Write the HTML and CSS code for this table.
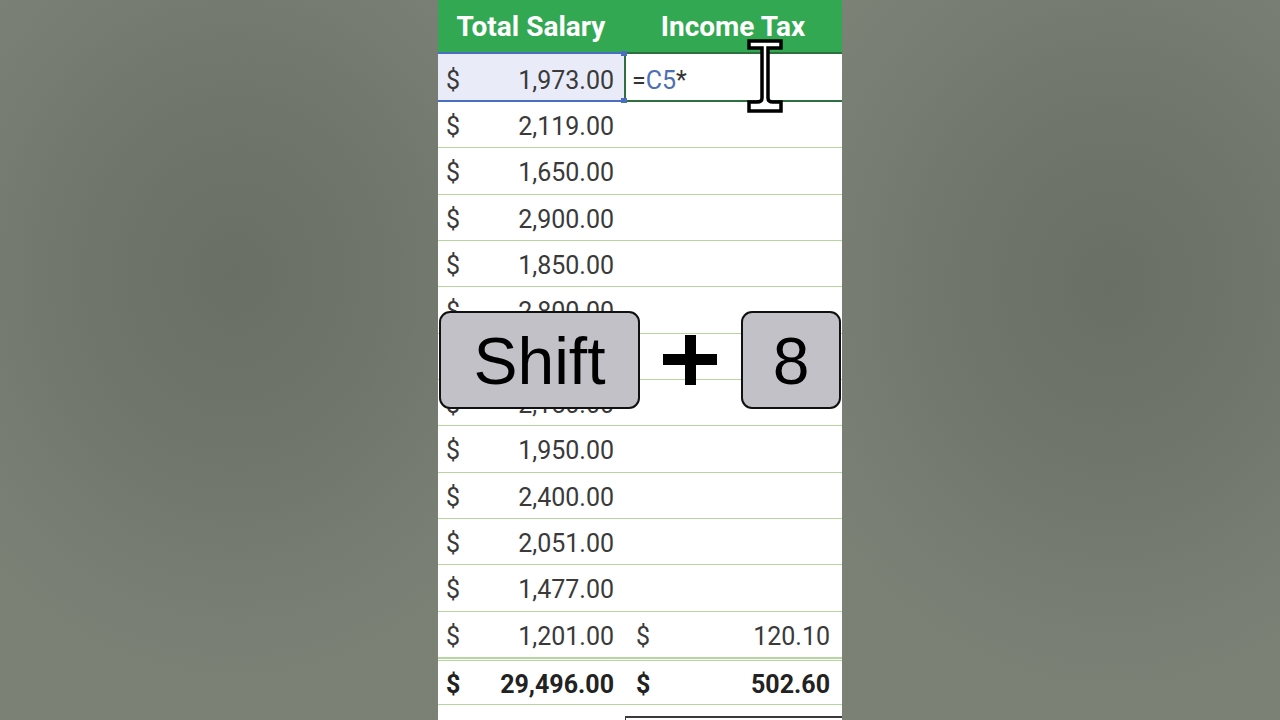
FILE: index.html
```html
<!DOCTYPE html>
<html lang="en">
<head>
<meta charset="utf-8">
<title>Income Tax formula</title>
<link rel="stylesheet" href="styles.css">
</head>
<body>
<div class="stage">
  <div class="side side-left"></div>
  <div class="sheet">
    <div class="head">
      <div class="hc c1">Total Salary</div>
      <div class="hc c2">Income Tax</div>
    </div>
    <div class="row row-active">
      <div class="cell c1 sel"><span class="cur">$</span><span class="num">1,973.00</span></div>
      <div class="cell c2 edit"><span class="op">=</span><span class="ref">C5</span><span class="op">*</span></div>
    </div>
    <div class="row"><div class="cell c1"><span class="cur">$</span><span class="num">2,119.00</span></div><div class="cell c2"></div></div>
    <div class="row"><div class="cell c1"><span class="cur">$</span><span class="num">1,650.00</span></div><div class="cell c2"></div></div>
    <div class="row"><div class="cell c1"><span class="cur">$</span><span class="num">2,900.00</span></div><div class="cell c2"></div></div>
    <div class="row"><div class="cell c1"><span class="cur">$</span><span class="num">1,850.00</span></div><div class="cell c2"></div></div>
    <div class="row"><div class="cell c1"><span class="cur">$</span><span class="num">2,800.00</span></div><div class="cell c2"></div></div>
    <div class="row"><div class="cell c1"><span class="cur">$</span><span class="num">4,975.00</span></div><div class="cell c2"></div></div>
    <div class="row"><div class="cell c1"><span class="cur">$</span><span class="num">2,150.00</span></div><div class="cell c2"></div></div>
    <div class="row"><div class="cell c1"><span class="cur">$</span><span class="num">1,950.00</span></div><div class="cell c2"></div></div>
    <div class="row"><div class="cell c1"><span class="cur">$</span><span class="num">2,400.00</span></div><div class="cell c2"></div></div>
    <div class="row"><div class="cell c1"><span class="cur">$</span><span class="num">2,051.00</span></div><div class="cell c2"></div></div>
    <div class="row"><div class="cell c1"><span class="cur">$</span><span class="num">1,477.00</span></div><div class="cell c2"></div></div>
    <div class="row"><div class="cell c1"><span class="cur">$</span><span class="num">1,201.00</span></div><div class="cell c2"><span class="cur">$</span><span class="num">120.10</span></div></div>
    <div class="row total"><div class="cell c1"><span class="cur">$</span><span class="num">29,496.00</span></div><div class="cell c2"><span class="cur">$</span><span class="num">502.60</span></div></div>
    <div class="below"><div class="below-gap"></div><div class="next-cell"></div></div>

    <span class="handle handle-top"></span>
    <span class="handle handle-bottom"></span>

    <svg class="ibeam" width="40" height="80" viewBox="0 0 40 80" aria-hidden="true">
      <path d="M4,4 H36 V11 H23 V61 Q23,65 28,65 H36 V74 H4 V65 H12 Q17,65 17,61 V11 H4 Z" fill="#ffffff" stroke="#000000" stroke-width="3.5" stroke-linejoin="miter"/>
    </svg>

    <div class="key key-shift">Shift</div>
    <div class="plus"></div>
    <div class="key key-8">8</div>
  </div>
  <div class="side side-right"></div>
</div>
</body>
</html>
```
FILE: styles.css
```css
html, body {
  margin: 0;
  padding: 0;
  width: 1280px;
  height: 720px;
  overflow: hidden;
}
body {
  font-family: Roboto, "Noto Sans", "Liberation Sans", sans-serif;
  background: #767b71;
}
.stage {
  display: flex;
  width: 1280px;
  height: 720px;
}
.side {
  width: 438px;
  height: 720px;
  flex: none;
}
.side-left {
  background: radial-gradient(ellipse 360px 420px at 235px 275px, #6a6f66 0%, #71766c 45%, #797e74 80%, #7c8176 100%);
}
.side-right {
  background: radial-gradient(ellipse 360px 420px at 270px 285px, #6a6f66 0%, #71766c 45%, #797e74 80%, #7c8176 100%);
}
.sheet {
  position: relative;
  width: 404px;
  height: 720px;
  flex: none;
  background: #ffffff;
  display: flex;
  flex-direction: column;
  overflow: hidden;
}
.head {
  display: flex;
  height: 52px;
  flex: none;
  background: #33a852;
  color: #ffffff;
  font-weight: 700;
  font-size: 28px;
}
.hc {
  display: flex;
  align-items: center;
  justify-content: center;
}
.c1 { width: 186px; flex: none; }
.c2 { width: 218px; flex: none; }

.row {
  display: flex;
  height: 46.33px;
  flex: none;
  box-sizing: border-box;
  border-bottom: 1px solid #b5d69e;
  font-size: 25px;
  color: #3a3a3a;
}
.cell {
  display: flex;
  align-items: center;
  justify-content: space-between;
  box-sizing: border-box;
  height: 100%;
}
.cell.c1 { padding: 4px 10px 0 8px; }
.cell.c2 { padding: 4px 12px 0 12px; }

.row-active {
  height: 50px;
  border-bottom: none;
}
.cell.sel {
  background: #e9ecf8;
  border-top: 2px solid #4a6fc2;
  border-bottom: 2px solid #4a6fc2;
  padding-top: 6px;
}
.cell.edit {
  justify-content: flex-start;
  padding-left: 6px;
  padding-top: 6px;
  border-top: 2px solid #2f6e3f;
  border-bottom: 2px solid #2f6e3f;
  border-left: 2px solid #2f6e3f;
}
.op { color: #333333; }
.ref { color: #4d6fb6; }

.total {
  height: 47px;
  border-top: 3px double #b5d69e;
  font-weight: 700;
  color: #222222;
}
.below {
  flex: 1;
  display: flex;
  flex-direction: column;
}
.below-gap { height: 11px; flex: none; }
.next-cell {
  flex: 1;
  margin-left: 187px;
  border-top: 2px solid #3a3a3a;
  border-left: 1px solid #3a3a3a;
}

.handle {
  position: absolute;
  left: 183px;
  width: 6px;
  height: 5px;
  background: #4a6fc2;
}
.handle-top { top: 51px; }
.handle-bottom { top: 98px; }

.ibeam {
  position: absolute;
  left: 307px;
  top: 37px;
}

.key {
  position: absolute;
  top: 311px;
  height: 98px;
  box-sizing: border-box;
  border: 2px solid #111111;
  border-radius: 11px;
  background: #c2c1c7;
  color: #000000;
  font-family: "Liberation Sans", Arial, sans-serif;
  font-size: 66px;
  display: flex;
  align-items: center;
  justify-content: center;
}
.key-shift {
  left: 1px;
  width: 201px;
  padding-top: 2px;
}
.key-8 {
  left: 303px;
  width: 100px;
  padding-top: 2px;
}
.plus {
  position: absolute;
  left: 225px;
  top: 335px;
  width: 54px;
  height: 50px;
}
.plus::before,
.plus::after {
  content: "";
  position: absolute;
  background: #000000;
}
.plus::before {
  left: 0;
  top: 19px;
  width: 54px;
  height: 11px;
}
.plus::after {
  left: 22px;
  top: 0;
  width: 11px;
  height: 50px;
}
```
